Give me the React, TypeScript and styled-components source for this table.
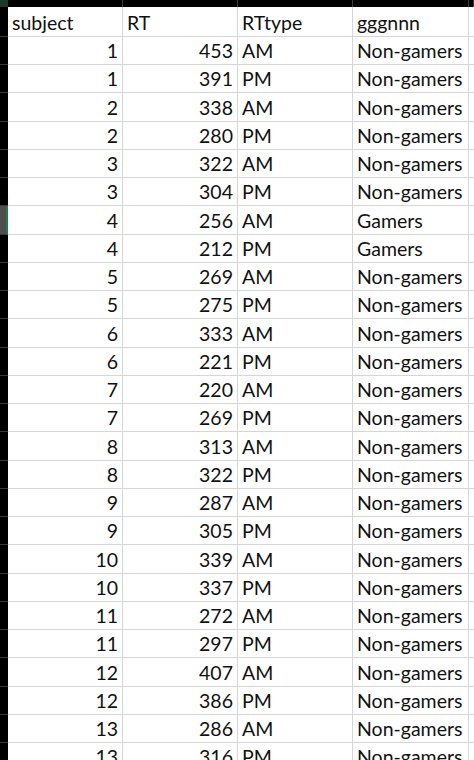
import React from 'react';
import styled, { createGlobalStyle } from 'styled-components';

const GlobalStyle = createGlobalStyle`
  html, body {
    margin: 0;
    padding: 0;
    background-color: #ffffff;
  }
  body {
    font-family: Lato, "Liberation Sans", sans-serif;
    overflow: hidden;
  }
`;

const GRID = '#d6d6d6';
const COLS = [115, 115, 115, 116];

const rows: [number, number, string, string][] = [
  [1, 453, 'AM', 'Non-gamers'],
  [1, 391, 'PM', 'Non-gamers'],
  [2, 338, 'AM', 'Non-gamers'],
  [2, 280, 'PM', 'Non-gamers'],
  [3, 322, 'AM', 'Non-gamers'],
  [3, 304, 'PM', 'Non-gamers'],
  [4, 256, 'AM', 'Gamers'],
  [4, 212, 'PM', 'Gamers'],
  [5, 269, 'AM', 'Non-gamers'],
  [5, 275, 'PM', 'Non-gamers'],
  [6, 333, 'AM', 'Non-gamers'],
  [6, 221, 'PM', 'Non-gamers'],
  [7, 220, 'AM', 'Non-gamers'],
  [7, 269, 'PM', 'Non-gamers'],
  [8, 313, 'AM', 'Non-gamers'],
  [8, 322, 'PM', 'Non-gamers'],
  [9, 287, 'AM', 'Non-gamers'],
  [9, 305, 'PM', 'Non-gamers'],
  [10, 339, 'AM', 'Non-gamers'],
  [10, 337, 'PM', 'Non-gamers'],
  [11, 272, 'AM', 'Non-gamers'],
  [11, 297, 'PM', 'Non-gamers'],
  [12, 407, 'AM', 'Non-gamers'],
  [12, 386, 'PM', 'Non-gamers'],
  [13, 286, 'AM', 'Non-gamers'],
  [13, 316, 'PM', 'Non-gamers'],
];

// bottom gridline of each data row, rows are ~28.25px tall
const lineAt = (k: number) => Math.floor(36 + k * 28.25 + 0.3);

const Sheet = styled.div`
  display: flex;
  flex-direction: column;
  width: 474px;
  background-color: #000000;
  color: #111;
  font-size: 19.5px;
`;

const ColHeadBar = styled.div`
  display: flex;
  height: 7px;
  flex-shrink: 0;
  background-color: #000000;
`;

const Corner = styled.div`
  width: 8px;
  flex-shrink: 0;
  background-color: #1c3a28;
`;

const ColHead = styled.div<{ $w?: number }>`
  box-sizing: border-box;
  width: ${(p) => (p.$w ? `${p.$w}px` : 'auto')};
  flex: ${(p) => (p.$w ? '0 0 auto' : '1')};
  border-right: 1px solid #3c3c3c;
`;

const Row = styled.div<{ $h: number }>`
  display: flex;
  height: ${(p) => p.$h}px;
  flex-shrink: 0;
`;

const RowHead = styled.div<{ $active?: boolean }>`
  box-sizing: border-box;
  width: 8px;
  flex-shrink: 0;
  background-color: ${(p) => (p.$active ? '#4e4e4e' : '#000000')};
  border-bottom: 1px solid #383838;
  border-right: ${(p) => (p.$active ? '2px solid #1e7b48' : '0 none')};
`;

const Cell = styled.div<{ $w?: number; $right?: boolean }>`
  box-sizing: border-box;
  width: ${(p) => (p.$w ? `${p.$w}px` : 'auto')};
  flex: ${(p) => (p.$w ? '0 0 auto' : '1')};
  min-width: 0;
  display: flex;
  align-items: flex-end;
  justify-content: ${(p) => (p.$right ? 'flex-end' : 'flex-start')};
  padding: 0 4px 2px 4px;
  background-color: #ffffff;
  border-right: 1px solid ${GRID};
  border-bottom: 1px solid ${GRID};
  white-space: nowrap;
  overflow: hidden;
  line-height: 22px;
`;

export default function App() {
  return (
    <>
      <GlobalStyle />
      <Sheet>
        <ColHeadBar>
          <Corner />
          {COLS.map((w, i) => (
            <ColHead key={i} $w={w} />
          ))}
          <ColHead />
        </ColHeadBar>

        <Row $h={30}>
          <RowHead />
          <Cell $w={COLS[0]}>subject</Cell>
          <Cell $w={COLS[1]}>RT</Cell>
          <Cell $w={COLS[2]}>RTtype</Cell>
          <Cell $w={COLS[3]}>gggnnn</Cell>
          <Cell />
        </Row>

        {rows.map(([subject, rt, type, group], i) => (
          <Row key={i} $h={lineAt(i + 1) - lineAt(i)}>
            <RowHead $active={i === 6} />
            <Cell $w={COLS[0]} $right>
              {subject}
            </Cell>
            <Cell $w={COLS[1]} $right>
              {rt}
            </Cell>
            <Cell $w={COLS[2]}>{type}</Cell>
            <Cell $w={COLS[3]}>{group}</Cell>
            <Cell />
          </Row>
        ))}
      </Sheet>
    </>
  );
}
